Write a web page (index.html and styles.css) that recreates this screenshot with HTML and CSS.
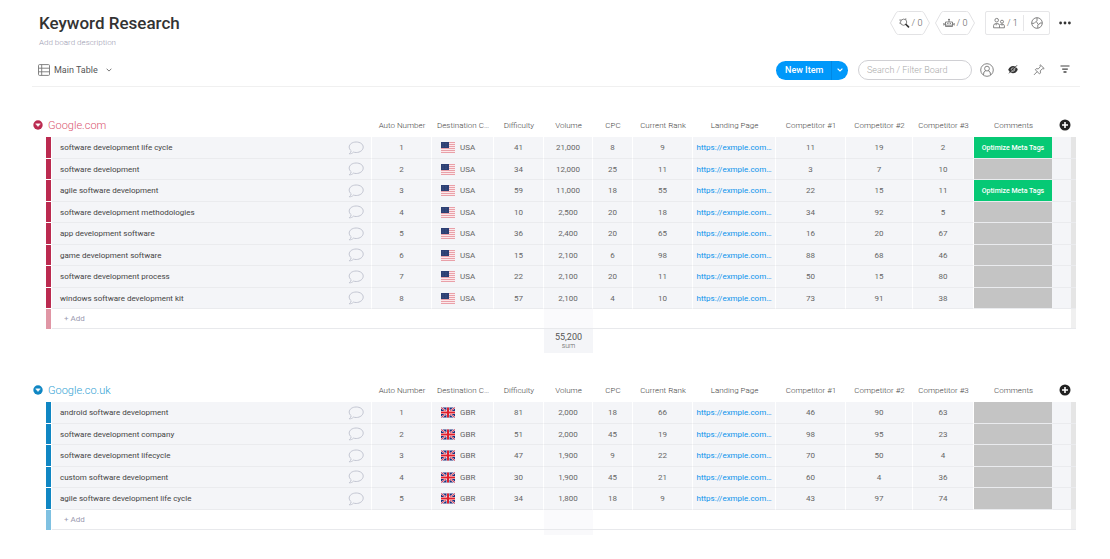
FILE: index.html
```
<!DOCTYPE html>
<html lang="en">
<head>
	<meta charset="UTF-8" />
	<meta name="viewport" content="width=device-width, initial-scale=1" />
	<title>Keyword Research</title>
	<link rel="stylesheet" href="styles.css">
</head>
<body>
	<!-- shared icons -->
	<svg class="sprite" aria-hidden="true">
		<symbol id="flag-usa" viewBox="0 0 14 11">
			<rect width="14" height="11" fill="#fbe9ec"/>
			<path d="M0 .5h14M0 2.5h14M0 4.5h14M0 6.5h14M0 8.5h14M0 10.5h14" stroke="#e9a0a8"/>
			<rect width="8" height="6" fill="#2c3f73"/>
			<path d="M1 1.5h6M1 3h6M1 4.5h6" stroke="#5a6996" stroke-width=".5" stroke-dasharray=".5 1"/>
		</symbol>
		<symbol id="flag-gbr" viewBox="0 0 14 10">
			<rect width="14" height="10" fill="#1c2f7c"/>
			<path d="M0 0l14 10M14 0L0 10" stroke="#fff" stroke-width="1.800"/>
			<path d="M0 0l14 10M14 0L0 10" stroke="#d8203a" stroke-width=".9"/>
			<path d="M7 0v10M0 5h14" stroke="#fff" stroke-width="3"/>
			<path d="M7 0v10M0 5h14" stroke="#e01f2d" stroke-width="2"/>
		</symbol>
		<symbol id="bubble" viewBox="0 0 16 14">
			<path d="M8.2 1C4.200 1 1.200 3.200 1.200 6.100c0 1.500.8 2.800 2 3.700-.2 1.200-.9 2.200-2 3 1.700.1 3.100-.4 4.200-1.700.9.300 1.800.4 2.800.4 4 0 7-2.400 7-5.400S12.200 1 8.200 1z" fill="none" stroke="#c3c6d2"/>
		</symbol>
		<symbol id="toggle" viewBox="0 0 10 10">
			<circle cx="5" cy="5" r="4.700" fill="currentColor"/>
			<path d="M2.600 3.800h4.800L5 6.600z" fill="#fff" stroke="#fff" stroke-width=".4" stroke-linejoin="round"/>
		</symbol>
		<symbol id="plus" viewBox="0 0 12 12">
			<circle cx="6" cy="6" r="5.500" fill="#222"/>
			<path d="M6 3v6M3 6h6" stroke="#fff" stroke-width="1.600"/>
		</symbol>
	</svg>

	<header class="header">
		<div class="header_top">
			<div class="titles">
				<h1>Keyword Research</h1>
				<p>Add board description</p>
			</div>
			<div class="board_actions">
				<button type="button" class="hexagon" aria-label="Integrations">
					<svg class="outline" viewBox="0 0 40 24"><path d="M8.500.5h23q1.500 0 2.300 1.200L39.500 12l-5.700 10.300q-.8 1.200-2.300 1.200h-23q-1.500 0-2.300-1.200L.5 12 6.200 1.700Q7 .5 8.500.5z"/></svg>
					<svg class="icon" viewBox="0 0 12 12"><path d="M3.300 3q2.200-1.600 4.500-.3Q9.600 5 8 7.300 5.500 9.200 3.300 7.500 1.600 5.200 3.300 3zM3.300 3H1.300M2.800 6.500L1.300 6M7.800 2.700V1.300" fill="none" stroke="#777" stroke-width=".9"/><path d="M8 7.500l2.500 2.400" stroke="#333" stroke-width="1.700" stroke-linecap="round"/></svg>
					<span>/ 0</span>
				</button>
				<button type="button" class="hexagon" aria-label="Automations">
					<svg class="outline" viewBox="0 0 40 24"><path d="M8.500.5h23q1.500 0 2.300 1.200L39.500 12l-5.700 10.300q-.8 1.200-2.300 1.200h-23q-1.500 0-2.300-1.200L.5 12 6.200 1.700Q7 .5 8.500.5z"/></svg>
					<svg class="icon" viewBox="0 0 12 12"><path d="M6 2.500v2.500M2.500 5h7v4.500h-7zM.8 6v2.500M11.200 6v2.500M1 7.200h1.500M9.500 7.200H11M3 8.200h6" fill="none" stroke="#666" stroke-width=".8"/><circle cx="6" cy="2.500" r=".8" fill="#555"/><path d="M4.500 6.500h.8M6.800 6.500h.8" stroke="#333"/></svg>
					<span>/ 0</span>
				</button>
				<div class="people">
					<button type="button" class="members" aria-label="Members">
						<svg class="icon" viewBox="0 0 12 12"><g fill="none" stroke="#777" stroke-width=".9"><circle cx="3.700" cy="3.200" r="1.800"/><circle cx="9" cy="4.700" r="1.500"/><path d="M.6 10.800V8.500Q.6 6.500 3.700 6.500T6.500 8.500v2.300zM6.800 8q.6-.9 2.200-.9 2.400 0 2.400 1.800v1.900h-5M3.200 6.600v1.700M9 7.200v1.500"/></g></svg>
						<span>/ 1</span>
					</button>
					<button type="button" class="activity" aria-label="Activity">
						<svg class="icon" viewBox="0 0 12 12"><g fill="none" stroke="#777" stroke-width=".9"><circle cx="6" cy="6" r="5.300"/><path d="M.7 6.300h2.500l2-2 2.300 3.600L9 6h2.300M6 .8v3.200M6.800 8v3"/></g></svg>
					</button>
				</div>
				<button type="button" class="more" aria-label="More">
					<svg viewBox="0 0 12 4"><g fill="#333"><circle cx="1.600" cy="2" r="1.400"/><circle cx="6" cy="2" r="1.400"/><circle cx="10.400" cy="2" r="1.400"/></g></svg>
				</button>
			</div>
		</div>
		<div class="toolbar">
			<button type="button" class="view">
				<svg class="icon" viewBox="0 0 12 12"><path d="M1.500.6h9q1 0 1 1v8.800q0 1-1 1h-9q-1 0-1-1V1.600q0-1 1-1zM.5 4.200h11M.5 7.800h11M3.700.6v10.800" fill="none" stroke="#777" stroke-width=".9"/></svg>
				<span>Main Table</span>
				<svg class="arrow" viewBox="0 0 6 4"><path d="M.6.7L3 3.100 5.400.7" fill="none" stroke="#777"/></svg>
			</button>
			<div class="tools">
				<div class="new_item">
					<button type="button" class="new_main">New Item</button>
					<button type="button" class="new_menu" aria-label="More item types">
						<svg class="arrow" viewBox="0 0 6 4"><path d="M.6.6L3 3l2.400-2.400" fill="none" stroke="#fff" stroke-width="1.200"/></svg>
					</button>
				</div>
				<input type="text" class="search" placeholder="Search / Filter Board" aria-label="Search / Filter Board" />
				<div class="tool_icons">
					<button type="button" aria-label="Person">
						<svg viewBox="0 0 14 14"><g fill="none" stroke="#777" stroke-width=".9"><circle cx="7" cy="7" r="6.300"/><circle cx="7" cy="5.600" r="2.400"/><path d="M3.500 12q-.3-3.800 2.300-4.300M10.500 12q.3-3.800-2.300-4.300"/></g></svg>
					</button>
					<button type="button" aria-label="Hide columns">
						<svg viewBox="0 0 14 14"><path d="M2.200 6.700Q4 3 7 3T11.800 6.700Q10 10.200 7 10.200T2.200 6.700z" fill="#333"/><circle cx="7" cy="6.600" r="1.700" fill="none" stroke="#ddd" stroke-width=".7"/><path d="M3.500 10.800l8-8" stroke="#fff" stroke-width=".7"/><path d="M3 10.300l8-8" stroke="#333" stroke-width=".9"/></svg>
					</button>
					<button type="button" aria-label="Pin">
						<svg viewBox="0 0 14 14"><path d="M8.300 1.800l3.900 3.700-1 .4-.8-.2-2.100 2.200.2 2-1 1L3.200 6.700l1-1 2.100.2 2-2.200-.3-.9zM5.200 8.600L2 11.900" fill="none" stroke="#777" stroke-width=".9" stroke-linejoin="round"/></svg>
					</button>
					<button type="button" aria-label="Filter">
						<svg viewBox="0 0 14 14"><path d="M2.500 3h9M4.200 6.200h5.600" stroke="#444" stroke-width="1.200"/><path d="M5.500 9h3" stroke="#444" stroke-width="1.500"/></svg>
					</button>
				</div>
			</div>
		</div>
	</header>

	<main class="board" id="board"></main>

	<script src="board.js"></script>
</body>
</html>
```

FILE: styles.css
```
* {
	box-sizing: border-box;
}
body {
	margin: 0;
	font-family: Roboto, "Liberation Sans", sans-serif;
	font-size: 8px;
	color: #555;
	background: #fff;
}
h1,p {
	margin: 0;
}
button,input {
	margin: 0;
	padding: 0;
	border: 0;
	background: none;
	font: inherit;
	color: inherit;
}
button {
	display: flex;
	align-items: center;
	cursor: pointer;
}
svg {
	display: block;
	flex: none;
}
.sprite {
	position: absolute;
	width: 0;
	height: 0;
}
.icon {
	width: 12px;
	height: 12px;
}
.arrow {
	width: 6px;
	height: 4px;
}

/* header */
.header {
	margin: 0 30px 0 32px;
	padding-top: 11px;
	border-bottom: 1px solid #f0f0f0;
}
.header_top {
	display: flex;
	justify-content: space-between;
	padding-left: 7px;
}
.titles h1 {
	font-size: 17px;
	line-height: 24px;
	font-weight: 500;
	color: #333;
}
.titles p {
	margin-top: 3px;
	font-size: 8px;
	line-height: 10px;
	font-weight: 300;
	color: #9a9ab0;
}
.board_actions {
	display: flex;
	align-items: flex-start;
	padding-right: 9px;
	font-size: 9px;
	font-weight: 300;
}
.hexagon {
	position: relative;
	justify-content: center;
	gap: 2px;
	width: 40px;
	height: 24px;
	margin-right: 5px;
}
.hexagon .outline {
	position: absolute;
	left: 0;
	top: 0;
	width: 40px;
	height: 24px;
	fill: none;
	stroke: #e2e2e4;
}
.people {
	display: flex;
	height: 24px;
	margin-left: 5px;
	padding: 3px 0;
	border: 1px solid #e6e6e8;
	border-radius: 2px;
}
.members {
	gap: 2px;
	width: 38px;
	padding-left: 7px;
	border-right: 1px solid #e6e6e8;
}
.activity {
	justify-content: center;
	width: 25px;
}
.more {
	height: 24px;
	margin-left: 9px;
}
.more svg {
	width: 12px;
	height: 4px;
}
.toolbar {
	display: flex;
	align-items: center;
	justify-content: space-between;
	height: 38px;
	padding: 6px 8px 0 6px;
}
.view {
	gap: 4px;
	font-size: 9px;
}
.view .arrow {
	margin-left: 4px;
}
.tools {
	display: flex;
	align-items: center;
}
.new_item {
	display: flex;
	height: 19px;
	border-radius: 10px;
	overflow: hidden;
	background: #0098fa;
	color: #fff;
}
.new_main {
	width: 56px;
	padding-left: 9px;
	font-size: 9px;
	font-weight: 500;
	border-right: 1px solid #0088e4;
}
.new_menu {
	justify-content: center;
	width: 16px;
}
.search {
	width: 114px;
	height: 20px;
	margin: 0 8px 0 10px;
	padding: 0 8px;
	border: 1px solid #d0d0d4;
	border-radius: 10px;
	font-size: 9px;
	font-weight: 300;
}
.search::placeholder {
	color: #aaa;
	opacity: 1;
}
.tool_icons {
	display: flex;
	gap: 12px;
}
.tool_icons svg {
	width: 14px;
	height: 14px;
}

/* groups */
.board {
	padding: 26px 34px 0 32px;
}
.group {
	width: 100%;
	margin-bottom: 25px;
	table-layout: fixed;
	border-collapse: separate;
	border-spacing: 0;
	text-align: center;
}
.group th,.group td {
	padding: 0;
	overflow: hidden;
	white-space: nowrap;
}
.c_gutter { width: 14px; }
.c_bar { width: 6px; }
.c_auto { width: 60px; }
.c_country { width: 62px; }
.c_difficulty { width: 50px; }
.c_volume { width: 49px; }
.c_cpc { width: 40px; }
.c_rank { width: 60px; }
.c_page { width: 83px; }
.c_comp1 { width: 70px; }
.c_comp2 { width: 67px; }
.c_comp3 { width: 61px; }
.c_comments { width: 79px; }
.c_add { width: 18px; }
.c_end { width: 5px; }

.group thead th {
	height: 24px;
	font-weight: 300;
	color: #444;
}
.group_title {
	display: flex;
	align-items: center;
	gap: 5px;
	padding-left: 1px;
	font-size: 11px;
}
.red .group_title span {
	color: #d9556f;
}
.blue .group_title span {
	color: #2f9fd4;
}
.group_title svg {
	width: 10px;
	height: 10px;
}
.add_column {
	margin: 0 auto;
}
.add_column svg {
	width: 12px;
	height: 12px;
}

.item td {
	height: 21px;
	background: #f4f5f8;
	border-right: 1px solid #fff;
	border-bottom: 1px solid #eaebee;
	color: #666;
}
.item:nth-child(odd) td {
	height: 22px;
}
.item .gutter {
	background: none;
	border-color: #fff;
}
.item .bar,.add_row .bar {
	background: currentColor;
	border-right: 1px solid #fff;
	border-bottom: 1px solid #fff;
}
.red .bar,.red .group_title svg {
	color: #bb2a50;
}
.blue .bar,.blue .group_title svg {
	color: #0f86c3;
}
.name {
	display: flex;
	align-items: center;
	justify-content: space-between;
	padding: 0 7px 0 8px;
	color: #444;
}
.name svg {
	width: 16px;
	height: 14px;
}
.country {
	display: flex;
	align-items: center;
	gap: 5px;
	padding-left: 9px;
}
.country svg {
	width: 14px;
	height: 11px;
}
.item a {
	color: #0b93ec;
	text-decoration: none;
}
.item .status {
	background: #c4c4c4;
	border-right-color: #f4f5f8;
	color: #fff;
}
.item .status.optimize {
	background: #06c975;
	font-size: 7px;
	font-weight: 500;
}
.item .add_cell {
	border-right: 0;
}
.item .end {
	background: #e5e5e5;
	border-right: 0;
}

/* new item row and totals */
.add_row td {
	height: 20px;
	border-bottom: 1px solid #e8e9ec;
}
.add_row .gutter,.add_row .bar {
	border-bottom: 0;
}
.red .add_row .bar {
	color: #e096a5;
}
.blue .add_row .bar {
	color: #7fc1e1;
}
.add_row input {
	display: block;
	width: 100%;
	height: 19px;
	padding: 0 12px;
}
.add_row input::placeholder {
	color: #9a9ab0;
	opacity: 1;
}
.add_row .volume {
	background: #fafafc;
}
.add_row .end {
	background: #f0f0f0;
}
.totals td {
	height: 5px;
}
.totals .volume {
	background: #f9f9fb;
}
.totals .sum {
	height: 24px;
	background: #f4f5f8;
	font-size: 7px;
	line-height: 8px;
	font-weight: 300;
}
.sum strong {
	display: block;
	font-size: 9px;
	line-height: 10px;
	font-weight: 400;
}
```

FILE: board.js
```
var columns = ["Auto Number", "Destination C…", "Difficulty", "Volume", "CPC", "Current Rank", "Landing Page", "Competitor #1", "Competitor #2", "Competitor #3", "Comments"];
var colNames = ["gutter", "bar", "name", "auto", "country", "difficulty", "volume", "cpc", "rank", "page", "comp1", "comp2", "comp3", "comments", "add", "end"];

// name, difficulty, volume, cpc, rank, competitors 1-3, comment
var groups = [
	{
		title: "Google.com", color: "red", country: "USA", sum: "55,200",
		items: [
			["software development life cycle", 41, "21,000", 8, 9, 11, 19, 2, "Optimize Meta Tags"],
			["software development", 34, "12,000", 25, 11, 3, 7, 10, ""],
			["agile software development", 59, "11,000", 18, 55, 22, 15, 11, "Optimize Meta Tags"],
			["software development methodologies", 10, "2,500", 20, 18, 34, 92, 5, ""],
			["app development software", 36, "2,400", 20, 65, 16, 20, 67, ""],
			["game development software", 15, "2,100", 6, 98, 88, 68, 46, ""],
			["software development process", 22, "2,100", 20, 11, 50, 15, 80, ""],
			["windows software development kit", 57, "2,100", 4, 10, 73, 91, 38, ""]
		]
	},
	{
		title: "Google.co.uk", color: "blue", country: "GBR", sum: "",
		items: [
			["android software development", 81, "2,000", 18, 66, 46, 90, 63, ""],
			["software development company", 51, "2,000", 45, 19, 98, 95, 23, ""],
			["software development lifecycle", 47, "1,900", 9, 22, 70, 50, 4, ""],
			["custom software development", 30, "1,900", 45, 21, 60, 4, 36, ""],
			["agile software development life cycle", 34, "1,800", 18, 9, 43, 97, 74, ""]
		]
	}
];

function icon(id) {
	return '<svg aria-hidden="true"><use href="#' + id + '"></use></svg>';
}

function td(value, className) {
	return '<td class="' + (className || "") + '">' + value + '</td>';
}

function itemRow(item, i, country) {
	var html = '<tr class="item">' + td("", "gutter") + td("", "bar");
	html += td('<div class="name"><span>' + item[0] + '</span><button type="button" aria-label="Updates">' + icon("bubble") + '</button></div>');
	html += td(i + 1);
	html += td('<div class="country">' + icon("flag-" + country.toLowerCase()) + '<span>' + country + '</span></div>');
	html += td(item[1]) + td(item[2]) + td(item[3]) + td(item[4]);
	html += td('<a href="#">https://exmple.com…</a>');
	html += td(item[5]) + td(item[6]) + td(item[7]);
	html += td(item[8], item[8] ? "status optimize" : "status");
	return html + td("", "add_cell") + td("", "end") + '</tr>';
}

function groupTable(group) {
	var html = '<table class="group ' + group.color + '"><colgroup>';
	colNames.forEach(function (name) {
		html += '<col class="c_' + name + '">';
	});
	html += '</colgroup><thead><tr><th colspan="3"><button type="button" class="group_title">' + icon("toggle") + '<span>' + group.title + '</span></button></th>';
	columns.forEach(function (name) {
		html += '<th>' + name + '</th>';
	});
	html += '<th colspan="2"><button type="button" class="add_column" aria-label="Add column">' + icon("plus") + '</button></th></tr></thead><tbody>';
	group.items.forEach(function (item, i) {
		html += itemRow(item, i, group.country);
	});
	html += '<tr class="add_row">' + td("", "gutter") + td("", "bar");
	html += '<td colspan="4"><input type="text" placeholder="+ Add" aria-label="Add item to ' + group.title + '" /></td>';
	html += td("", "volume") + '<td colspan="8"></td>' + td("", "end") + '</tr></tbody>';
	html += '<tfoot><tr class="totals"><td colspan="6"></td>';
	html += group.sum ? td('<strong>' + group.sum + '</strong>sum', "sum") : td("", "volume");
	return html + '<td colspan="9"></td></tr></tfoot></table>';
}

document.getElementById("board").innerHTML = groups.map(groupTable).join("");
```
